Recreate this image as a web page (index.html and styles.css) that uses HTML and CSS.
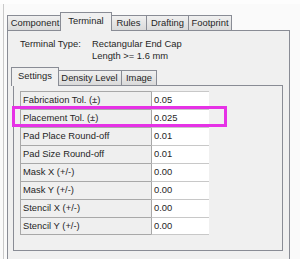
FILE: index.html
```html
<!DOCTYPE html>
<html>
<head>
<meta charset="utf-8">
<link rel="stylesheet" href="styles.css">
</head>
<body>
<div class="clip"></div>
<div class="frame">
  <div class="tabs">
    <div class="tab t-comp">Component</div>
    <div class="tab active t-term">Terminal</div>
    <div class="tab t-rules">Rules</div>
    <div class="tab t-draft">Drafting</div>
    <div class="tab t-foot">Footprint</div>
  </div>
  <div class="panel">
    <div class="info">
      <div class="info-label">Terminal Type:</div>
      <div class="info-value">
        <div>Rectangular End Cap</div>
        <div>Length &gt;= 1.6 mm</div>
      </div>
    </div>
    <div class="tabs inner-tabs">
      <div class="tab active i-set">Settings</div>
      <div class="tab i-dens">Density Level</div>
      <div class="tab i-img">Image</div>
    </div>
    <div class="inner-panel">
      <div class="grid">
        <div class="row"><div class="lbl">Fabrication Tol. (±)</div><div class="val">0.05</div></div>
        <div class="row hl"><div class="lbl">Placement Tol. (±)</div><div class="val">0.025</div><div class="mark"></div></div>
        <div class="row"><div class="lbl">Pad Place Round-off</div><div class="val">0.01</div></div>
        <div class="row"><div class="lbl">Pad Size Round-off</div><div class="val">0.01</div></div>
        <div class="row"><div class="lbl">Mask X (+/-)</div><div class="val">0.00</div></div>
        <div class="row"><div class="lbl">Mask Y (+/-)</div><div class="val">0.00</div></div>
        <div class="row"><div class="lbl">Stencil X (+/-)</div><div class="val">0.00</div></div>
        <div class="row"><div class="lbl">Stencil Y (+/-)</div><div class="val">0.00</div></div>
      </div>
    </div>
  </div>
</div>
</body>
</html>
```
FILE: styles.css
```css
html, body {
  margin: 0;
  padding: 0;
}
body {
  width: 300px;
  height: 259px;
  overflow: hidden;
  background: #fafafa;
  font-family: "Liberation Sans", Arial, sans-serif;
  font-size: 9.4px;
  color: #262626;
}
.clip {
  height: 4px;
  background: #fdfdfd;
}
.frame {
  border-left: 1px solid #c9c9c9;
  margin-left: 3px;
  padding: 8px 0 0 3px;
  height: 247px;
  overflow: hidden;
}
.tabs {
  display: flex;
  align-items: flex-end;
  height: 18px;
}
.tab {
  box-sizing: border-box;
  height: 15px;
  line-height: 13px;
  border: 1px solid #898c95;
  border-bottom: none;
  margin-right: -1px;
  background: linear-gradient(#f0f0f0, #dadada);
  text-align: center;
  position: relative;
}
.tab.active {
  height: 19px;
  margin-bottom: -1px;
  line-height: 16px;
  background: #f0f0f0;
  z-index: 1;
  margin-left: -2px;
  margin-right: -2px;
}
.t-comp { width: 56px; }
.t-term { width: 52px; }
.t-rules { width: 37px; }
.t-draft { width: 43px; }
.t-foot { width: 44px; }
.panel {
  width: 283px;
  box-sizing: border-box;
  border: 1px solid #898c95;
  background: #f0f0f0;
  padding: 7px 6px 0 5px;
  height: 240px;
}
.info {
  display: flex;
  padding-left: 7px;
  line-height: 12px;
}
.info-label {
  width: 72px;
}
.inner-tabs {
  margin-top: 5px;
}
.i-set { width: 48px; margin-left: 0; }
.i-dens { width: 65px; }
.i-img { width: 36px; }
.inner-panel {
  box-sizing: border-box;
  height: 166px;
  border: 1px solid #898c95;
  background: #f0f0f0;
  padding: 5px 0 0 6px;
}
.grid {
  display: flex;
  flex-direction: column;
  width: 189px;
}
.row {
  display: flex;
  height: 18px;
  position: relative;
}
.lbl {
  box-sizing: border-box;
  width: 131px;
  border: 1px solid #a8a8a8;
  border-bottom: none;
  border-right: none;
  background: #efefef;
  padding-left: 2px;
  line-height: 16px;
}
.val {
  box-sizing: border-box;
  flex: 1;
  border-top: 1px solid #c8c8c8;
  border-left: 1px solid #a8a8a8;
  background: #fff;
  padding-left: 2px;
  line-height: 16px;
}
.row:last-child .lbl {
  border-bottom: 1px solid #a8a8a8;
}
.row:last-child .val {
  border-bottom: 1px solid #c8c8c8;
}
.mark {
  position: absolute;
  left: -8px;
  top: -3px;
  width: 215px;
  height: 21px;
  box-sizing: border-box;
  border: 3px solid #e632e6;
}
```
